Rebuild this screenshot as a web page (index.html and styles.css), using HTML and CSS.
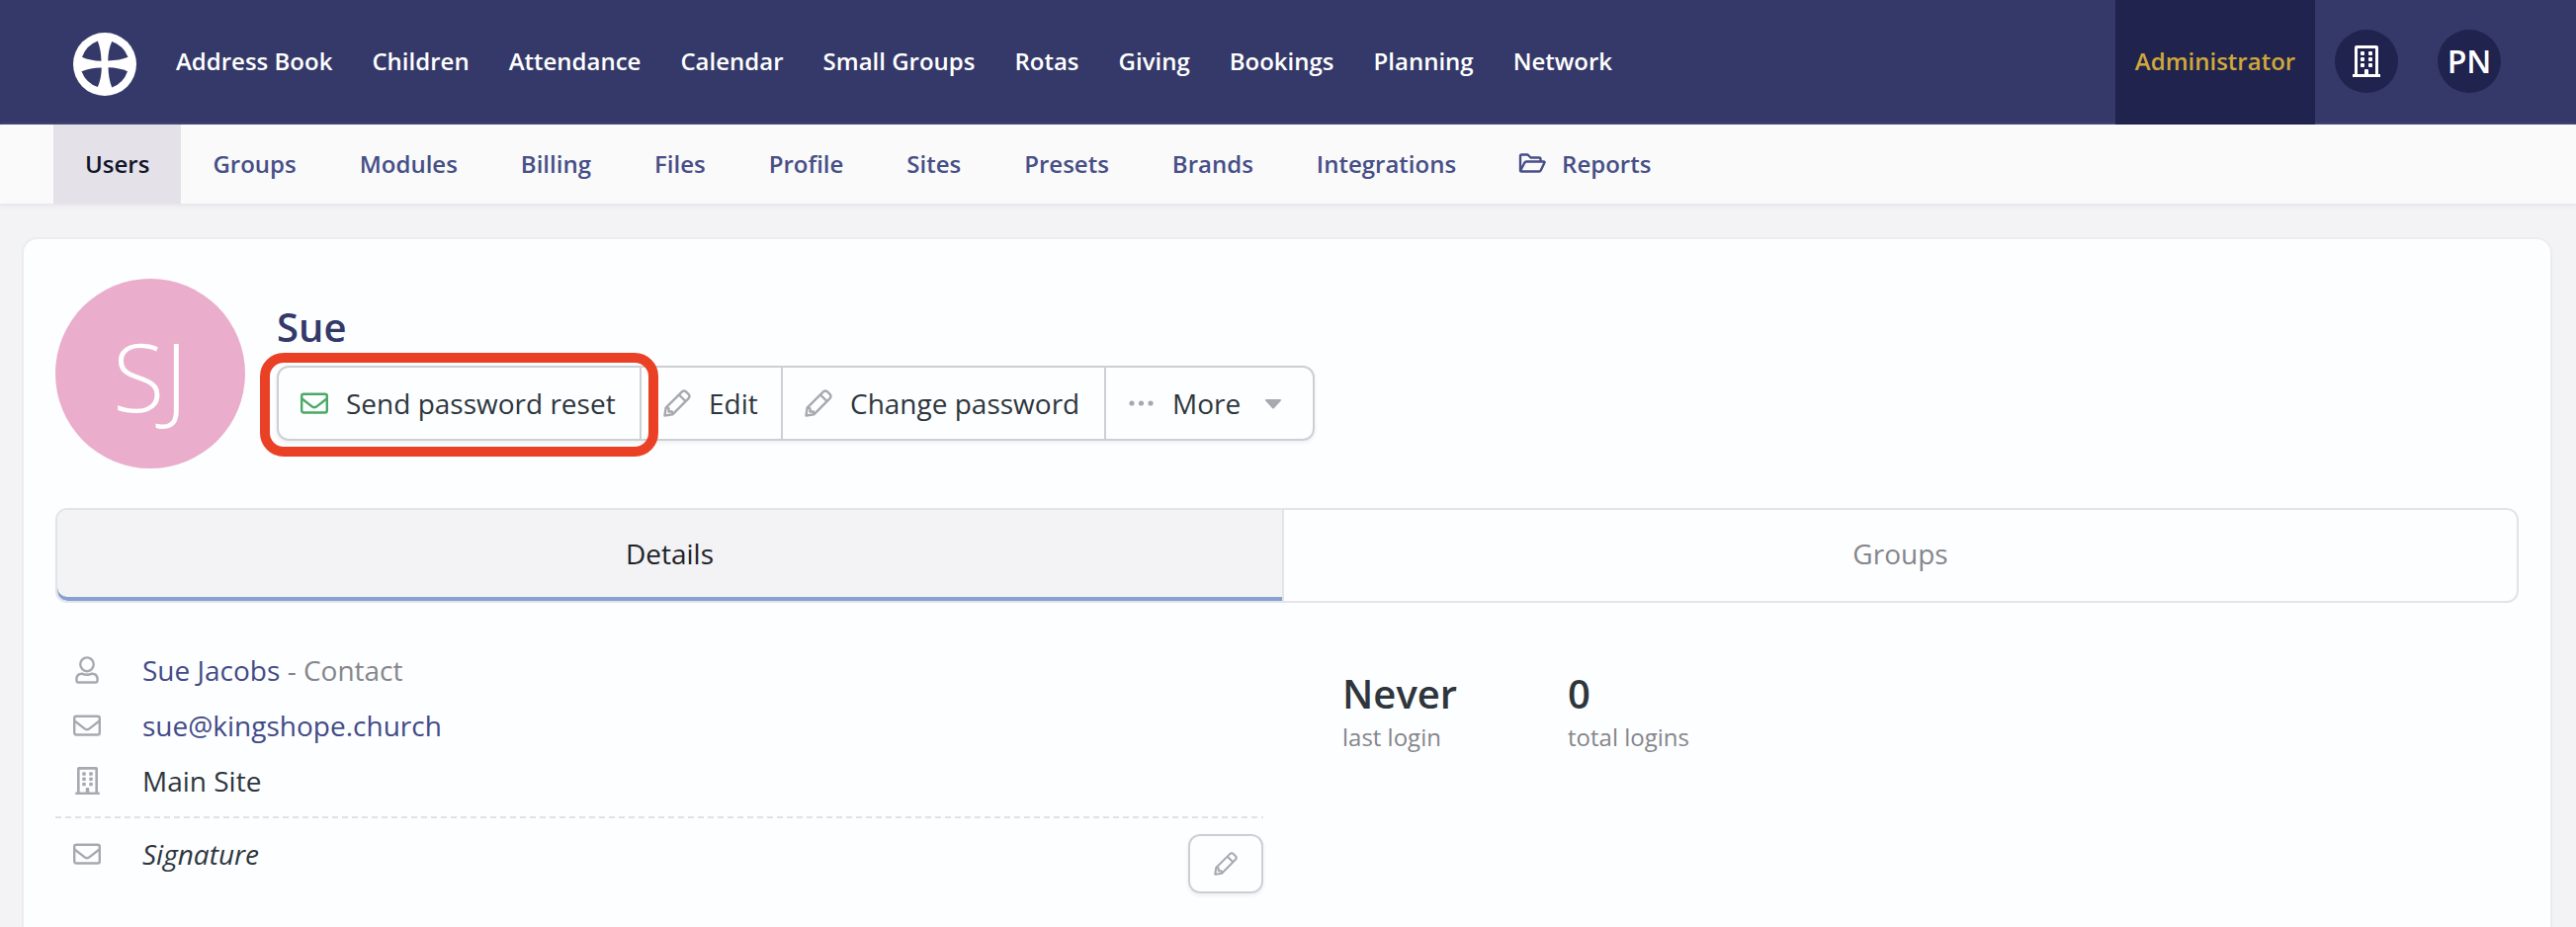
FILE: index.html
```html
<!DOCTYPE html>
<html lang="en">
<head>
<meta charset="utf-8">
<title>Sue - Users</title>
<link rel="stylesheet" href="styles.css">
</head>
<body>
<svg class="defs" width="0" height="0">
  <symbol id="pencil" viewBox="0 0 28 28"><g fill="none" stroke="currentColor" stroke-width="2.4" stroke-linejoin="round"><path d="M1.500 26.500 2.600 18.600 19.200 2.200Q21 .8 22.800 2.200L25.800 5.200Q27.200 7 25.800 8.800L9.400 25.400Z"/><path d="M16 5.500 22.500 12M3 18.600 5.500 19.200V22.500H8.800L9.400 25.200"/></g></symbol>
  <symbol id="mail" viewBox="0 0 28 22"><g fill="none" stroke="currentColor" stroke-width="2.400"><rect x="1.200" y="1.700" width="25.600" height="18.800" rx="2"/><path d="M1.500 6.500 11 13.800Q14 16.500 17 13.800L26.500 6.500"/></g></symbol>
  <symbol id="building" viewBox="0 0 28 32"><g fill="currentColor"><path d="M4 0H24Q26 0 26 2V29H28V32H0V29H2V2Q2 0 4 0ZM5 3V29H12V25Q12 24 13 24H15Q16 24 16 25V29H23V3Z" fill-rule="evenodd"/><rect x="8" y="6" width="4" height="4" rx="1"/><rect x="16" y="6" width="4" height="4" rx="1"/><rect x="8" y="12" width="4" height="4" rx="1"/><rect x="16" y="12" width="4" height="4" rx="1"/><rect x="8" y="18" width="4" height="4" rx="1"/><rect x="16" y="18" width="4" height="4" rx="1"/></g></symbol>
</svg>
<header class="topbar">
  <svg class="logo" viewBox="0 0 64 64"><circle cx="32" cy="32" r="32" fill="#fff"/><g fill="#343969"><path id="q" d="M24.800 8.500Q13 13 9 24.800 17 28.500 28.500 28.800 28.200 17 24.800 8.500Z"/><use href="#q" transform="rotate(90 32 32)"/><use href="#q" transform="rotate(180 32 32)"/><use href="#q" transform="rotate(270 32 32)"/></g></svg>
  <nav class="main-nav"><a>Address Book</a><a>Children</a><a>Attendance</a><a>Calendar</a><a>Small Groups</a><a>Rotas</a><a>Giving</a><a>Bookings</a><a>Planning</a><a>Network</a></nav>
  <a class="admin">Administrator</a>
  <a class="round site"><svg width="28" height="32"><use href="#building"/></svg></a>
  <a class="round user">PN</a>
</header>
<nav class="subnav">
  <a class="active">Users</a><a>Groups</a><a>Modules</a><a>Billing</a><a>Files</a><a>Profile</a><a>Sites</a><a>Presets</a><a>Brands</a><a>Integrations</a><a class="reports"><svg width="28" height="20" viewBox="0 0 28 20" fill="none" stroke="currentColor" stroke-width="2.400" stroke-linejoin="round"><path d="M2 17.500V3Q2 1.500 3.500 1.500H9.500L12.500 4.500H21Q22.500 4.500 22.500 6V8.500M2 18 6.300 9.700Q7 8.500 8.300 8.500H25.500Q27 8.500 26.400 9.800L22.800 17.200Q22.200 18.500 21 18.500H3Q2 18.500 2 17.500"/></svg>Reports</a>
</nav>
<main class="card">
  <section class="profile">
    <div class="avatar">SJ</div>
    <div class="identity">
      <h1>Sue</h1>
      <div class="actions">
        <a class="send"><svg class="green" width="28" height="22"><use href="#mail"/></svg>Send password reset</a>
        <a class="edit"><svg width="28" height="28"><use href="#pencil"/></svg>Edit</a>
        <a class="change"><svg width="28" height="28"><use href="#pencil"/></svg>Change password</a>
        <a class="more"><svg width="26" height="6" fill="currentColor"><circle cx="3" cy="3" r="2.600"/><circle cx="12.500" cy="3" r="2.600"/><circle cx="22" cy="3" r="2.600"/></svg>More<svg class="caret" width="18" height="10" fill="currentColor"><path d="M2 0H16Q18 0 16.800 1.500L10 9Q9 10 8 9L1.200 1.500Q0 0 2 0Z"/></svg></a>
        <div class="highlight"></div>
      </div>
    </div>
  </section>
  <div class="tabs"><a class="active">Details</a><a>Groups</a></div>
  <div class="columns">
    <section class="details">
      <div class="row"><svg width="24" height="28" viewBox="0 0 26 30" fill="none" stroke="currentColor" stroke-width="2.600"><ellipse cx="13" cy="8.800" rx="7.300" ry="7.500"/><path d="M1.500 25.500Q1.500 19 7.500 19 10 20.200 13 20.200T18.500 19Q24.500 19 24.500 25.500 24.500 28.500 22.500 28.500H3.500Q1.500 28.500 1.500 25.500Z"/></svg><span><a>Sue Jacobs</a> <em class="muted">- Contact</em></span></div>
      <div class="row"><svg width="28" height="22"><use href="#mail"/></svg><a>sue@kingshope.church</a></div>
      <div class="row"><svg width="25" height="28"><use href="#building"/></svg><span>Main Site</span></div>
      <div class="signature"><div class="row"><svg width="28" height="22"><use href="#mail"/></svg><i>Signature</i></div><a class="edit-sig"><svg width="24" height="24"><use href="#pencil"/></svg></a></div>
    </section>
    <section class="stats">
      <div class="stat first"><b>Never</b><span>last login</span></div>
      <div class="stat"><b>0</b><span>total logins</span></div>
    </section>
  </div>
</main>
</body>
</html>
```
FILE: styles.css
```css
* { box-sizing: border-box; }
body { margin: 0; height: 938px; overflow: hidden; background: #f3f3f5; color: #2e363c; font-family: "Open Sans", sans-serif; font-size: 28px; }
svg { display: block; flex: none; }
.defs { position: absolute; }
.topbar { display: flex; align-items: center; height: 126px; padding-left: 74px; background: #343969; color: #fff; font-size: 24px; font-weight: 600; }
.logo { width: 64px; height: 64px; margin-top: 4px; }
.main-nav { display: flex; gap: 40px; margin-left: 40px; padding-bottom: 3px; white-space: nowrap; }
.admin { display: flex; align-items: center; justify-content: center; width: 202px; height: 126px; padding-bottom: 3px; margin-left: auto; background: #1f234e; color: #cfa83a; }
.round { display: flex; align-items: center; justify-content: center; width: 64px; height: 64px; border-radius: 50%; background: #1f234e; margin-left: 20px; margin-top: -2px; }
.user { margin-left: 40px; margin-right: 76px; padding-bottom: 2px; font-size: 32px; }
.subnav { display: flex; height: 80px; padding-left: 54px; background: #fafafa; color: #474f87; font-size: 24px; font-weight: 600; box-shadow: 0 2px 4px #e4e4ea; }
.subnav a { display: flex; align-items: center; padding: 0 32px 2px; white-space: nowrap; }
.subnav .active { background: #e4e2e8; color: #12152b; }
.subnav .reports { padding-left: 31px; }
.reports svg { margin-right: 16px; }
.card { height: 720px; margin: 36px 26px 0 24px; padding: 40px 32px 0; background: #fdfeff; border-radius: 14px; box-shadow: 0 0 0 2px #ececef; }
.profile { display: flex; height: 192px; }
.avatar { display: flex; align-items: center; justify-content: center; width: 192px; height: 192px; border-radius: 50%; background: #ebadcc; color: #fff; font-size: 96px; font-weight: 300; padding-top: 2px; }
.identity { margin-left: 32px; padding-top: 22px; }
h1 { margin: 0; height: 66px; line-height: 54px; font-size: 40px; font-weight: 600; color: #343969; }
.actions { position: relative; display: flex; width: max-content; height: 76px; border: 2px solid #cecfd2; border-radius: 12px; box-shadow: 0 2px 4px #eeeef2; }
.actions > a { display: flex; align-items: center; border-left: 2px solid #cecfd2; white-space: nowrap; padding-left: 22px; }
.actions svg { color: #a8a9ae; margin-right: 18px; }
.actions > .send { border: 0; width: 365px; }
.actions .green { color: #4ba966; }
.edit { width: 143px; }
.change { width: 327px; }
.actions > .more { width: 211px; padding-left: 23px; }
.actions .caret { margin: 2px 0 0 24px; }
.highlight { position: absolute; left: -19px; top: -15px; width: 403px; height: 105px; border: 10px solid #ea4025; border-radius: 24px; }
.tabs { display: grid; grid-template-columns: 1241px 1fr; height: 96px; margin-top: 40px; border: 2px solid #e4e3e6; border-radius: 12px; overflow: hidden; }
.tabs a { display: flex; align-items: center; justify-content: center; padding-bottom: 5px; color: #85868b; }
.tabs .active { background: #f3f3f5; color: #202226; border-right: 2px solid #e4e3e6; border-bottom-left-radius: 10px; box-shadow: inset 0 -4px #84a1d1; }
.columns { display: flex; }
.details { width: 1222px; padding-top: 40px; }
.row { display: grid; grid-template-columns: 64px 1fr; justify-items: center; align-items: center; height: 56px; }
.row > :last-child { justify-self: start; margin-left: 24px; }
.row svg { color: #a8a9ae; }
.row a { color: #434b87; }
.muted { color: #85868b; font-style: normal; }
.signature { display: grid; grid-template-columns: 1fr 76px; margin-top: 8px; padding-top: 10px; background: repeating-linear-gradient(90deg, #e2e2e6 0 6px, transparent 6px 10px) top / 100% 2px no-repeat; }
.edit-sig { display: flex; align-items: center; justify-content: center; height: 60px; margin-top: 8px; border: 2px solid #cecfd2; border-radius: 12px; box-shadow: 0 2px 4px #eeeef2; color: #a8a9ae; }
.stats { display: flex; padding: 65px 0 0 80px; }
.stat { display: flex; flex-direction: column; }
.first { width: 228px; }
.stat b { font-size: 40px; font-weight: 600; line-height: 54px; }
.stat span { font-size: 24px; line-height: 34px; color: #85868b; }
```
